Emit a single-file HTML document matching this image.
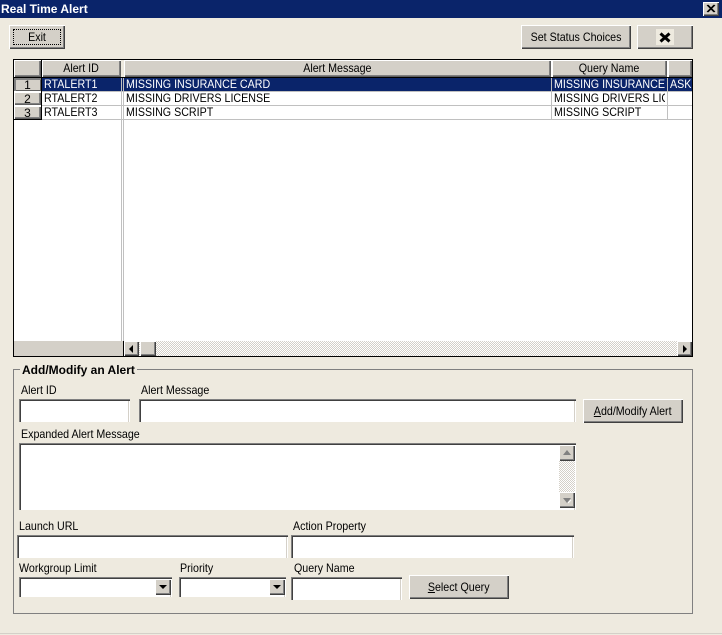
<!DOCTYPE html>
<html>
<head>
<meta charset="utf-8">
<style>
html,body{margin:0;padding:0;}
body{width:722px;height:635px;background:#eeeadf;position:relative;overflow:hidden;font-family:"Liberation Sans",Arial,sans-serif;font-size:12px;color:#000;}
.a{position:absolute;box-sizing:border-box;}
.t{position:absolute;white-space:nowrap;line-height:13px;transform:scaleX(.89);transform-origin:0 0;}
.b{font-weight:bold;transform:none;}
.s{display:inline-block;transform:scaleX(.89);transform-origin:50% 50%;}
.l{display:inline-block;transform:scaleX(.89);transform-origin:0 50%;}
.btn{position:absolute;box-sizing:border-box;background:#d4d0c8;box-shadow:inset 1px 1px #fff,inset -1px -1px #404040,inset -2px -2px #808080;text-align:center;white-space:nowrap;}
.inp{position:absolute;box-sizing:border-box;background:#fff;box-shadow:inset 1px 1px #808080,inset 2px 2px #404040,inset -1px 0 #fff,inset -2px 0 #d4d0c8,inset 0 -1px #fff;}
.hd{position:absolute;box-sizing:border-box;top:60px;height:17px;background:#d4d0c8;box-shadow:inset 1px 1px #fff,inset -1px -1px #606060,inset -2px -2px #808080;text-align:center;line-height:17px;white-space:nowrap;overflow:hidden;}
.rh{position:absolute;box-sizing:border-box;left:14px;width:27px;height:13px;background:#d4d0c8;box-shadow:inset 1px 1px #fff,inset -1px -1px #606060,inset -2px -2px #808080;text-align:center;line-height:15px;}
.c{position:absolute;white-space:nowrap;overflow:hidden;height:14px;line-height:13px;}
.hl{position:absolute;height:1px;background:#c0c0c0;}
.vl{position:absolute;width:1px;background:#c0c0c0;}
.chk{position:absolute;background:conic-gradient(#fff 25%,#d4d0c8 0 50%,#fff 0 75%,#d4d0c8 0) 0 0/2px 2px;}
svg{position:absolute;display:block;}
u{text-decoration:underline;}
</style>
</head>
<body>
<!-- Title bar -->
<div class="a" style="left:0;top:0;width:722px;height:18px;background:#0a246a;"></div>
<div class="t b" style="left:1px;top:3px;color:#fff;">Real Time Alert</div>
<div class="btn" style="left:703px;top:2px;width:16px;height:14px;"></div>
<svg style="left:706px;top:4px;" width="10" height="9"><path d="M1 1 L8 8 M2 1 L9 8 M8 1 L1 8 M9 1 L2 8" stroke="#000" stroke-width="1" fill="none"/></svg>

<!-- Top buttons -->
<div class="btn" style="left:9px;top:25px;width:56px;height:24px;line-height:24px;"><span class="s">Exit</span></div>
<div class="a" style="left:13px;top:29px;width:48px;height:16px;border:1px dotted #000;"></div>
<div class="btn" style="left:521px;top:25px;width:110px;height:24px;line-height:24px;"><span class="s">Set Status Choices</span></div>
<div class="btn" style="left:637px;top:25px;width:56px;height:24px;"></div>
<div class="a" style="left:656px;top:29px;width:18px;height:16px;background:#eeeadf;"></div>
<svg style="left:658px;top:31px;" width="14" height="13"><path d="M2.5 2.5 L11.5 10.5 M11.5 2.5 L2.5 10.5" stroke="#000" stroke-width="3" fill="none"/></svg>

<!-- Grid -->
<div class="a" style="left:13px;top:59px;width:680px;height:298px;background:#fff;border:1px solid #000;"></div>
<div class="hd" style="left:14px;width:27px;"></div>
<div class="hd" style="left:42px;width:79px;"><span class="s">Alert ID</span></div>
<div class="hd" style="left:124px;width:427px;"><span class="s">Alert Message</span></div>
<div class="hd" style="left:552px;width:115px;"><span class="s">Query Name</span></div>
<div class="hd" style="left:668px;width:24px;"></div>
<div class="a" style="left:121px;top:60px;width:3px;height:17px;background:#eeeadf;"></div>
<div class="a" style="left:14px;top:77px;width:678px;height:1px;background:#000;"></div>

<!-- selected row -->
<div class="a" style="left:42px;top:78px;width:650px;height:13px;background:#0a246a;"></div>

<div class="rh" style="top:78px;box-shadow:inset 2px 2px #808080,inset -1px -1px #606060;">1</div>
<div class="rh" style="top:92px;">2</div>
<div class="rh" style="top:106px;">3</div>
<div class="a" style="left:41px;top:60px;width:1px;height:60px;background:#000;"></div>
<div class="a" style="left:14px;top:119px;width:28px;height:1px;background:#000;"></div>

<div class="hl" style="left:42px;top:91px;width:650px;"></div>
<div class="hl" style="left:42px;top:105px;width:650px;"></div>
<div class="hl" style="left:42px;top:119px;width:650px;"></div>
<div class="vl" style="left:121px;top:78px;height:263px;"></div>
<div class="vl" style="left:123px;top:78px;height:263px;"></div>
<div class="vl" style="left:551px;top:78px;height:42px;"></div>
<div class="vl" style="left:667px;top:78px;height:42px;"></div>

<div class="c" style="left:44px;top:78px;width:76px;color:#fff;"><span class="l">RTALERT1</span></div>
<div class="c" style="left:126px;top:78px;width:420px;color:#fff;"><span class="l">MISSING INSURANCE CARD</span></div>
<div class="c" style="left:554px;top:78px;width:112px;color:#fff;"><span class="l">MISSING INSURANCE</span></div>
<div class="c" style="left:670px;top:78px;width:22px;color:#fff;"><span class="l">ASK</span></div>
<div class="c" style="left:44px;top:92px;width:76px;"><span class="l">RTALERT2</span></div>
<div class="c" style="left:126px;top:92px;width:420px;"><span class="l">MISSING DRIVERS LICENSE</span></div>
<div class="c" style="left:554px;top:92px;width:111px;"><span class="l">MISSING DRIVERS LICENSE</span></div>
<div class="c" style="left:44px;top:106px;width:76px;"><span class="l">RTALERT3</span></div>
<div class="c" style="left:126px;top:106px;width:420px;"><span class="l">MISSING SCRIPT</span></div>
<div class="c" style="left:554px;top:106px;width:112px;"><span class="l">MISSING SCRIPT</span></div>

<!-- Grid horizontal scrollbar -->
<div class="a" style="left:14px;top:341px;width:109px;height:15px;background:#d4d0c8;"></div>
<div class="a" style="left:123px;top:341px;width:1px;height:15px;background:#000;"></div>
<div class="chk" style="left:124px;top:341px;width:568px;height:15px;"></div>
<div class="btn" style="left:124px;top:341px;width:15px;height:15px;"></div>
<svg style="left:129px;top:345px;" width="5" height="8"><path d="M4 0 L4 8 L0 4 Z" fill="#000"/></svg>
<div class="btn" style="left:140px;top:341px;width:16px;height:15px;"></div>
<div class="btn" style="left:677px;top:341px;width:15px;height:15px;"></div>
<svg style="left:683px;top:345px;" width="5" height="8"><path d="M0 0 L0 8 L4 4 Z" fill="#000"/></svg>

<!-- Group box -->
<div class="a" style="left:13px;top:369px;width:680px;height:245px;border:1px solid #808080;"></div>
<div class="t b" style="left:20px;top:364px;padding:0 2px;background:#eeeadf;">Add/Modify an Alert</div>

<div class="t" style="left:21px;top:384px;">Alert ID</div>
<div class="inp" style="left:19px;top:399px;width:111px;height:23px;"></div>
<div class="t" style="left:141px;top:384px;">Alert Message</div>
<div class="inp" style="left:139px;top:399px;width:437px;height:23px;"></div>
<div class="btn" style="left:583px;top:399px;width:100px;height:24px;line-height:24px;"><span class="s"><u>A</u>dd/Modify Alert</span></div>

<div class="t" style="left:21px;top:428px;">Expanded Alert Message</div>
<div class="inp" style="left:19px;top:443px;width:557px;height:67px;"></div>
<div class="chk" style="left:559px;top:445px;width:16px;height:63px;"></div>
<div class="btn" style="left:559px;top:445px;width:16px;height:16px;"></div>
<svg style="left:563px;top:450px;" width="8" height="5"><path d="M4 0 L8 5 L0 5 Z" fill="#808080"/></svg>
<div class="btn" style="left:559px;top:492px;width:16px;height:16px;"></div>
<svg style="left:563px;top:498px;" width="9" height="6"><path d="M0 0 L8 0 L4 5 Z" fill="#808080"/><path d="M5 5 L8 2" stroke="#fff" fill="none"/></svg>

<div class="t" style="left:19px;top:520px;">Launch URL</div>
<div class="inp" style="left:17px;top:535px;width:271px;height:23px;"></div>
<div class="t" style="left:293px;top:520px;">Action Property</div>
<div class="inp" style="left:291px;top:535px;width:283px;height:23px;"></div>

<div class="t" style="left:19px;top:562px;">Workgroup Limit</div>
<div class="inp" style="left:19px;top:577px;width:153px;height:20px;"></div>
<div class="btn" style="left:155px;top:579px;width:16px;height:16px;"></div>
<svg style="left:159px;top:585px;" width="8" height="4"><path d="M0 0 L8 0 L4 4 Z" fill="#000"/></svg>

<div class="t" style="left:180px;top:562px;">Priority</div>
<div class="inp" style="left:179px;top:577px;width:107px;height:20px;"></div>
<div class="btn" style="left:269px;top:579px;width:16px;height:16px;"></div>
<svg style="left:273px;top:585px;" width="8" height="4"><path d="M0 0 L8 0 L4 4 Z" fill="#000"/></svg>

<div class="t" style="left:294px;top:562px;">Query Name</div>
<div class="inp" style="left:291px;top:577px;width:111px;height:23px;"></div>
<div class="btn" style="left:409px;top:575px;width:100px;height:24px;line-height:24px;"><span class="s"><u>S</u>elect Query</span></div>

<div class="a" style="left:0;top:633px;width:722px;height:1px;background:#d4d0c8;"></div>
</body>
</html>
